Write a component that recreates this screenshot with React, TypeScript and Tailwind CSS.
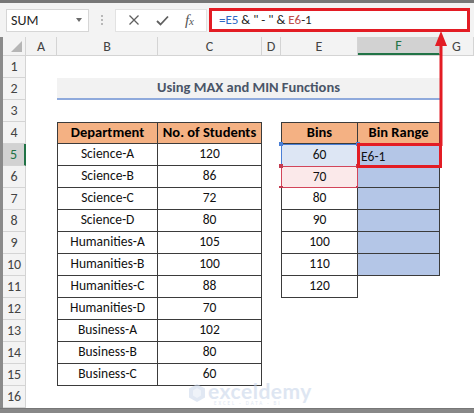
import clsx from "clsx";

const font = "font-['Calibri','Lato','Liberation_Sans',sans-serif]";

type Col = "A" | "B" | "C" | "D" | "E" | "F" | "G";

const colWidth: Record<Col, string> = {
  A: "w-[31px]",
  B: "w-[101px]",
  C: "w-[104px]",
  D: "w-[19px]",
  E: "w-[77px]",
  F: "w-[82px]",
  G: "w-[34px]",
};

const cols: Col[] = ["A", "B", "C", "D", "E", "F", "G"];

const departments = [
  ["Science-A", "120"],
  ["Science-B", "86"],
  ["Science-C", "72"],
  ["Science-D", "80"],
  ["Humanities-A", "105"],
  ["Humanities-B", "100"],
  ["Humanities-C", "88"],
  ["Humanities-D", "70"],
  ["Business-A", "102"],
  ["Business-B", "80"],
  ["Business-C", "60"],
];

const bins = ["60", "70", "80", "90", "100", "110", "120"];

const line = "border-[#3b3b3b]";

function Corners({ color }: { color: string }) {
  const sq = clsx("absolute w-[4px] h-[4px]", color);
  return (
    <>
      <span className={clsx(sq, "-left-[2px] -top-[2px]")} />
      <span className={clsx(sq, "-right-[2px] -top-[2px]")} />
      <span className={clsx(sq, "-left-[2px] -bottom-[2px]")} />
      <span className={clsx(sq, "-right-[2px] -bottom-[2px]")} />
    </>
  );
}

function cellFor(row: number, col: Col) {
  const base = clsx("shrink-0 h-full flex items-center justify-center relative", colWidth[col]);

  if (row === 4 && (col === "B" || col === "C" || col === "E" || col === "F")) {
    const label = { B: "Department", C: "No. of Students", E: "Bins", F: "Bin Range" }[col];
    return (
      <div
        key={col}
        className={clsx(
          base,
          "bg-[#f4b183] border-t border-r border-b font-bold text-[14.5px] text-black",
          line,
          (col === "B" || col === "E") && "border-l"
        )}
      >
        {label}
      </div>
    );
  }

  if (row >= 5 && row <= 15 && (col === "B" || col === "C")) {
    const d = departments[row - 5];
    return (
      <div
        key={col}
        className={clsx(base, "bg-white border-r border-b text-[13.5px] text-[#111]", line, col === "B" && "border-l")}
      >
        {col === "B" ? d[0] : d[1]}
      </div>
    );
  }

  if (row >= 5 && row <= 11 && col === "E") {
    const v = bins[row - 5];
    if (row === 5) {
      return (
        <div key={col} className={clsx(base, "bg-[#dde6f4] text-[13.5px] text-[#111]")}>
          <div className="absolute inset-0 border-l border-t border-r border-[#4a7fd6]" />
          <span className="absolute -left-[2px] -top-[2px] w-[4px] h-[4px] bg-[#4a7fd6]" />
          <span className="absolute -right-[2px] -top-[2px] w-[4px] h-[4px] bg-[#4a7fd6]" />
          {v}
        </div>
      );
    }
    if (row === 6) {
      return (
        <div key={col} className={clsx(base, "bg-[#fbe9ea] text-[13.5px] text-[#111]")}>
          <div className="absolute inset-0 border border-[#d2455a]" />
          <Corners color="bg-[#c43b50]" />
          {v}
        </div>
      );
    }
    return (
      <div key={col} className={clsx(base, "bg-white border-l border-r border-b text-[13.5px] text-[#111]", line)}>
        {v}
      </div>
    );
  }

  if (row >= 5 && row <= 10 && col === "F") {
    return (
      <div
        key={col}
        className={clsx(base, "bg-[#b4c6e7] border-r border-b text-[13.5px] text-[#111]", line)}
      >
        {row === 5 ? (
          <div className="absolute inset-0 overflow-hidden flex flex-col justify-end items-start pl-[3px] pb-[1px] leading-[15px]">
            <span className="whitespace-nowrap">=E5 &amp; " - " &amp;</span>
            <span className="whitespace-nowrap">E6-1</span>
          </div>
        ) : null}
      </div>
    );
  }

  return <div key={col} className={clsx(base, "bg-white")} />;
}

function FormulaBar() {
  return (
    <div className="h-[34px] bg-[#f3f3f3] flex items-center pl-[6px] pr-[4px]">
      <div className="w-[83px] h-[23px] bg-white border border-[#d6d6d6] flex items-center justify-between pl-[4px] pr-[6px]">
        <span className="text-[14px] text-[#222]">SUM</span>
        <svg width="6" height="4" viewBox="0 0 6 4">
          <path d="M0 0 L6 0 L3 4 Z" fill="#6b6b6b" />
        </svg>
      </div>
      <div className="w-[26px] flex flex-col items-center gap-[2px]">
        <span className="w-[2px] h-[2px] bg-[#b8b8b8]" />
        <span className="w-[2px] h-[2px] bg-[#b8b8b8]" />
        <span className="w-[2px] h-[2px] bg-[#b8b8b8]" />
      </div>
      <div className="w-[92px] h-[23px] bg-white border border-[#e2e2e2] flex items-center justify-around px-[4px]">
        <svg width="12" height="12" viewBox="0 0 12 12">
          <path d="M1.5 1.5 L10.5 10.5 M10.5 1.5 L1.5 10.5" stroke="#5f5f5f" strokeWidth="1.3" fill="none" />
        </svg>
        <svg width="13" height="11" viewBox="0 0 13 11">
          <path d="M1 6 L4.5 9.5 L12 1.5" stroke="#5f5f5f" strokeWidth="1.8" fill="none" />
        </svg>
        <span className="font-['Liberation_Serif',serif] italic text-[15px] text-[#555] leading-none">
          f<span className="text-[11px]">x</span>
        </span>
      </div>
      <div className="ml-[2px] flex-1 h-[24px] bg-white border-[3px] border-[#e31c24] flex items-center pl-[7px] text-[13px] text-[#222] whitespace-nowrap">
        <span className="text-[#2f67c4]">=E5</span>
        <span>&nbsp;&amp; " - " &amp;&nbsp;</span>
        <span className="text-[#c0504d]">E6</span>
        <span>-1</span>
      </div>
    </div>
  );
}

function ColumnHeaders() {
  return (
    <div className="h-[19px] flex bg-[#f3f3f3] border-b border-[#d4d4d4]">
      <div className="w-[23px] shrink-0 h-full relative border-r border-[#d4d4d4]">
        <svg className="absolute right-[3px] bottom-[3px]" width="11" height="11" viewBox="0 0 11 11">
          <path d="M11 0 L11 11 L0 11 Z" fill="#b5b5b5" />
        </svg>
      </div>
      {cols.map((c) => (
        <div
          key={c}
          className={clsx(
            "shrink-0 h-full flex items-center justify-center text-[14px] border-r border-[#d4d4d4]",
            colWidth[c],
            c === "F" ? "bg-[#d2d2d2] border-b-2 border-b-[#217346] text-[#217346]" : "text-[#444]"
          )}
        >
          {c}
        </div>
      ))}
    </div>
  );
}

function RowHeader({ row }: { row: number }) {
  const active = row === 5;
  return (
    <div
      className={clsx(
        "w-[23px] shrink-0 h-full flex items-center justify-center text-[14px] border-b border-[#d4d4d4]",
        active ? "bg-[#d2d2d2] border-r-2 border-r-[#217346] text-[#217346]" : "bg-[#f3f3f3] border-r border-r-[#d4d4d4] text-[#444]"
      )}
    >
      {row}
    </div>
  );
}

function SheetRow({ row }: { row: number }) {
  if (row === 2) {
    return (
      <div className="h-[22px] flex">
        <RowHeader row={row} />
        <div className={clsx("shrink-0 h-full bg-white", colWidth.A)} />
        <div className="shrink-0 w-[383px] h-full bg-[#f2f2f2] border-b-2 border-[#8faadc] flex items-center justify-center font-bold text-[14.5px] text-[#4a5568]">
          Using MAX and MIN Functions
        </div>
        <div className={clsx("shrink-0 h-full bg-white", colWidth.G)} />
      </div>
    );
  }
  return (
    <div className="h-[22px] flex">
      <RowHeader row={row} />
      {cols.map((c) => cellFor(row, c))}
    </div>
  );
}

export default function App() {
  const rows = Array.from({ length: 16 }, (_, i) => i + 1);
  return (
    <div className={clsx("relative w-[474px] h-[413px] overflow-hidden bg-[#777777] pt-[3px]", font)}>
      <FormulaBar />
      <div className="pl-[3px] bg-[#8a8a8a]">
        <ColumnHeaders />
        {rows.map((r) => (
          <SheetRow key={r} row={r} />
        ))}
      </div>

      {/* red box on F5 */}
      <div className="absolute left-[357px] top-[143px] w-[85px] h-[25px] border-[3px] border-[#e31c24]" />

      {/* arrow from F5 up to the formula */}
      <svg className="absolute left-[434px] top-[30px]" width="14" height="116" viewBox="0 0 14 116">
        <path d="M7 14 L7 116" stroke="#e31c24" strokeWidth="3" />
        <path d="M1 16 L13 16 L7 1 Z" fill="#e31c24" />
      </svg>

      {/* watermark */}
      <div className="absolute left-[189px] top-[380px] flex items-center gap-[3px] opacity-55 pointer-events-none">
        <svg width="16" height="18" viewBox="0 0 16 18">
          <path d="M8 0 L16 4.5 L16 13.5 L8 18 L0 13.5 L0 4.5 Z" fill="#c9d6ea" />
          <path d="M8 4 L12 6.5 L12 11.5 L8 14 L4 11.5 L4 6.5 Z" fill="#e3eaf5" />
        </svg>
        <div className="flex flex-col leading-none">
          <span className="font-['Lato',sans-serif] text-[21px] font-bold text-[#c4d2e8] tracking-[0.5px]">exceldemy</span>
          <span className="text-[5px] tracking-[2px] text-[#c4d2e8] pl-[6px]">EXCEL · DATA · BI</span>
        </div>
      </div>
      <div className="absolute left-0 right-0 bottom-0 h-[4px] bg-[#888888]" />
    </div>
  );
}
